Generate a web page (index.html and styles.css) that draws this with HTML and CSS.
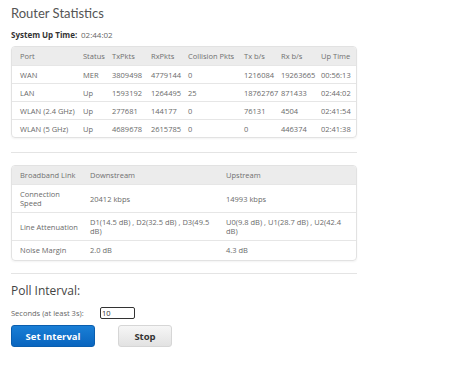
FILE: index.html
```html
<!DOCTYPE html>
<html>
<head>
<meta charset="utf-8">
<link rel="stylesheet" href="styles.css">
</head>
<body>
<div class="page">
  <h1 class="title">Router Statistics</h1>
  <div class="uptime"><span class="uptime-label">System Up Time:</span><span class="uptime-value">02:44:02</span></div>
  <div class="card">
    <table class="stats ports">
      <colgroup>
        <col style="width:68px"><col style="width:29px"><col style="width:39px"><col style="width:37px"><col style="width:56px"><col style="width:37px"><col style="width:40px"><col>
      </colgroup>
      <thead>
        <tr><th>Port</th><th>Status</th><th>TxPkts</th><th>RxPkts</th><th>Collision Pkts</th><th>Tx b/s</th><th>Rx b/s</th><th>Up Time</th></tr>
      </thead>
      <tbody>
        <tr><td>WAN</td><td>MER</td><td>3809498</td><td>4779144</td><td>0</td><td>1216084</td><td>19263665</td><td>00:56:13</td></tr>
        <tr><td>LAN</td><td>Up</td><td>1593192</td><td>1264495</td><td>25</td><td>18762767</td><td>871433</td><td>02:44:02</td></tr>
        <tr><td>WLAN (2.4 GHz)</td><td>Up</td><td>277681</td><td>144177</td><td>0</td><td>76131</td><td>4504</td><td>02:41:54</td></tr>
        <tr><td>WLAN (5 GHz)</td><td>Up</td><td>4689678</td><td>2615785</td><td>0</td><td>0</td><td>446374</td><td>02:41:38</td></tr>
      </tbody>
    </table>
  </div>
  <div class="rule"></div>
  <div class="card card-link">
    <table class="stats link">
      <colgroup><col style="width:75px"><col style="width:136px"><col></colgroup>
      <thead>
        <tr><th>Broadband Link</th><th>Downstream</th><th>Upstream</th></tr>
      </thead>
      <tbody>
        <tr class="tall"><td>Connection Speed</td><td>20412 kbps</td><td>14993 kbps</td></tr>
        <tr class="tall"><td>Line Attenuation</td><td>D1(14.5 dB) , D2(32.5 dB) , D3(49.5 dB)</td><td>U0(9.8 dB) , U1(28.7 dB) , U2(42.4 dB)</td></tr>
        <tr><td>Noise Margin</td><td>2.0 dB</td><td>4.3 dB</td></tr>
      </tbody>
    </table>
  </div>
  <div class="rule rule-2"></div>
  <h2 class="poll-title">Poll Interval:</h2>
  <div class="poll-row"><label class="poll-label" for="sec">Seconds (at least 3s):</label><input id="sec" class="poll-input" type="text" value="10"></div>
  <div class="buttons">
    <button class="btn btn-primary">Set Interval</button>
    <button class="btn btn-secondary">Stop</button>
  </div>
</div>
</body>
</html>
```
FILE: styles.css
```css
html, body { margin: 0; padding: 0; background: #fff; }
body { font-family: "Open Sans", "Noto Sans", sans-serif; color: #6a6a6a; }
.page { width: 346px; padding: 3px 0 0 11px; }
.title { margin: 0; font-family: Lato, "Open Sans", sans-serif; font-size: 13px; font-weight: 400; color: #555; line-height: 20px; }
.uptime { margin-top: 6px; font-size: 8px; line-height: 12px; display: flex; }
.uptime-label { font-weight: 700; color: #333; width: 70px; }
.uptime-value { color: #666; }
.card { margin-top: 5px; border: 1px solid #e2e2e2; border-radius: 4px; overflow: hidden; box-shadow: 0 1px 2px rgba(0,0,0,0.05); }
.stats { width: 100%; border-collapse: collapse; table-layout: fixed; font-size: 7.5px; font-weight: 400; }
.stats th { background: #ececec; font-weight: 400; text-align: left; color: #707070; height: 18px; padding: 0 0 0 3px; white-space: nowrap; }
.stats td { height: 17px; padding: 0 0 0 3px; border-top: 1px solid #e6e6e6; color: #6a6a6a; white-space: nowrap; vertical-align: middle; }
.stats th:first-child, .stats td:first-child { padding-left: 8px; }
.stats.link td { white-space: normal; line-height: 9px; height: 19px; padding-right: 12px; }
.stats.link td:first-child { padding-right: 8px; }
.stats.link tr.tall td { height: 26px; padding-top: 1px; }
.rule { height: 1px; background: #e4e4e4; margin-top: 14px; }
.card-link { margin-top: 12px; }
.rule-2 { margin-top: 12px; }
.poll-title { margin: 9px 0 0; font-size: 12px; font-weight: 400; color: #444; line-height: 16px; }
.poll-row { margin-top: 8px; display: flex; align-items: center; font-size: 7.5px; }
.poll-label { width: 89px; color: #666; }
.poll-input { width: 31px; height: 10px; padding: 0 1px; border: 1px solid #333; border-radius: 2px; font-size: 7.5px; font-family: inherit; color: #333; }
.buttons { margin-top: 6px; display: flex; gap: 23px; }
.btn { height: 22px; border-radius: 3px; font-family: inherit; font-size: 9.5px; font-weight: 700; cursor: pointer; }
.btn-primary { width: 84px; background: linear-gradient(#1a7fd6, #0965bf); color: #fff; border: 1px solid #0a5eae; }
.btn-secondary { width: 54px; background: linear-gradient(#f6f6f6, #e2e2e2); color: #333; border: 1px solid #d6d6d6; }
```
